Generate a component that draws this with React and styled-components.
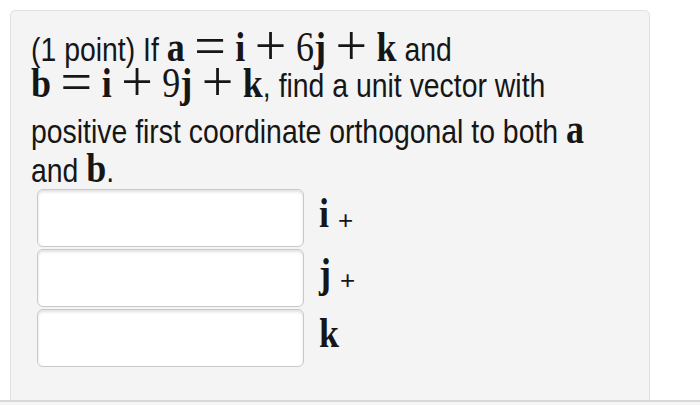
import React from "react";
import styled, { createGlobalStyle } from "styled-components";

const GlobalStyle = createGlobalStyle`
  body {
    margin: 0;
    background: #fff;
  }
`;

const Page = styled.div`
  height: 400px;
  padding: 10px 0 0 10px;
  box-sizing: border-box;
  overflow: hidden;
`;

const Card = styled.div`
  width: 640px;
  height: 420px;
  box-sizing: border-box;
  background: #f4f4f4;
  border: 1px solid #e1e1e1;
  border-radius: 5px;
  padding: 23px 20px 0 20px;
  color: #161616;
  font-family: "Liberation Sans", Arial, sans-serif;
  font-size: 28.4px;
`;

// the source is a tall, narrow rendering: glyphs are stretched upward
// around the baseline (34px line box, baseline ~26.7px from its top)
const Line = styled.div`
  height: 34px;
  line-height: 34px;
  margin-top: ${(p) => p.$gap || 0}px;
  white-space: nowrap;
  transform: scaleY(1.2);
  transform-origin: left 26.7px;
`;

const MathVar = styled.span`
  font-family: "Liberation Serif", "Times New Roman", serif;
  font-weight: 700;
  font-size: 36px;
  line-height: 0;
`;

const MathNum = styled.span`
  font-family: "Liberation Serif", "Times New Roman", serif;
  font-weight: 400;
  font-size: 36px;
  line-height: 0;
`;

// operators are wide and flat in the source, so undo most of the stretch
const MathOp = styled.span`
  display: inline-block;
  font-family: "Liberation Serif", "Times New Roman", serif;
  font-weight: 400;
  font-size: 56px;
  line-height: 20px;
  vertical-align: -3px;
  margin: 0 ${(p) => p.$space}px;
  transform: scaleY(0.85);
  transform-origin: left 28.9px;
`;

const Answers = styled.div`
  display: flex;
  flex-direction: column;
  gap: 2px;
  margin: 0 0 0 6px;
`;

const Row = styled.div`
  display: flex;
  align-items: flex-start;
`;

const Field = styled.input`
  width: 267px;
  height: 58px;
  box-sizing: border-box;
  margin: 0;
  padding: 0 10px;
  border: 1px solid #c9c9c9;
  border-radius: 6px;
  background: #fff;
  box-shadow: inset 0 2px 3px rgba(0, 0, 0, 0.12);
  font-size: 20px;
  outline: none;
`;

const Unit = styled.span`
  margin: 4px 0 0 15px;
  line-height: 44px;
  font-family: "Liberation Serif", "Times New Roman", serif;
  font-weight: 700;
  font-size: 36px;
  color: #161616;
  transform: scaleY(1.2);
  transform-origin: left 34.2px;
`;

const Plus = styled.span`
  margin: 17px 0 0 9px;
  line-height: 28px;
  font-family: "Liberation Sans", Arial, sans-serif;
  font-weight: 400;
  font-size: 26px;
  color: #161616;
`;

const Divider = styled.div`
  height: 2px;
  background: #d9d9d9;
`;

const Footer = styled.div`
  height: 3px;
  background: #f6f6f6;
`;

// tokens: letters are bold vectors, digits are plain, = and + are operators
const Expr = ({ tokens }) => (
  <>
    {tokens.map((t, i) => {
      if (t === "=" || t === "+")
        return (
          <MathOp key={i} $space={9.5}>
            {t}
          </MathOp>
        );
      if (/^\d$/.test(t)) return <MathNum key={i}>{t}</MathNum>;
      return <MathVar key={i}>{t}</MathVar>;
    })}
  </>
);

const answers = [
  { unit: "i", plus: true },
  { unit: "j", plus: true },
  { unit: "k", plus: false },
];

export default function App() {
  return (
    <>
      <GlobalStyle />
      <Page>
        <Card>
          <Line>
            (1 point) If <Expr tokens={["a", "=", "i", "+", "6", "j", "+", "k"]} /> and
          </Line>
          <Line $gap={2}>
            <Expr tokens={["b", "=", "i", "+", "9", "j", "+", "k"]} />, find a unit vector with
          </Line>
          <Line $gap={12}>
            positive first coordinate orthogonal to both <Expr tokens={["a"]} />
          </Line>
          <Line $gap={5}>
            and <Expr tokens={["b"]} />.
          </Line>
          <Answers>
            {answers.map((a) => (
              <Row key={a.unit}>
                <Field type="text" />
                <Unit>{a.unit}</Unit>
                {a.plus && <Plus>+</Plus>}
              </Row>
            ))}
          </Answers>
        </Card>
      </Page>
      <Divider />
      <Footer />
    </>
  );
}
